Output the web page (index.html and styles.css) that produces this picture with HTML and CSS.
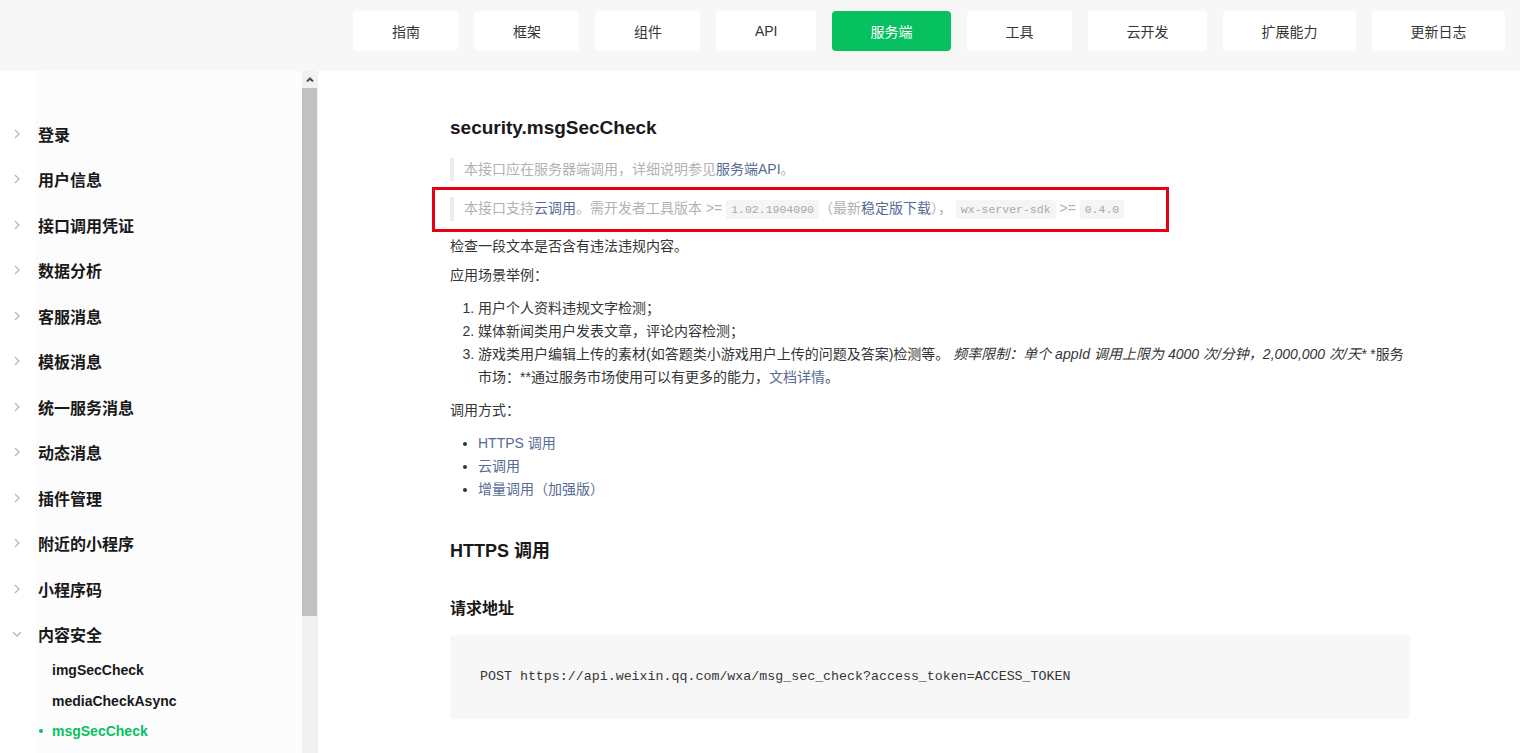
FILE: index.html
```html
<!DOCTYPE html>
<html lang="zh-CN">
<head>
<meta charset="UTF-8">
<title>security.msgSecCheck</title>
<link rel="stylesheet" href="styles.css">
</head>
<body>
<header class="top">
  <nav class="top-nav">
    <a class="nav-btn">指南</a>
    <a class="nav-btn">框架</a>
    <a class="nav-btn">组件</a>
    <a class="nav-btn">API</a>
    <a class="nav-btn on">服务端</a>
    <a class="nav-btn">工具</a>
    <a class="nav-btn">云开发</a>
    <a class="nav-btn">扩展能力</a>
    <a class="nav-btn">更新日志</a>
  </nav>
</header>

<div class="frame">
  <aside class="side">
    <ul class="menu">
      <li class="menu-item"><a><span class="arrow"><svg width="6" height="10" viewBox="0 0 6 10"><polyline points="1,1 5,5 1,9" /></svg></span>登录</a></li>
      <li class="menu-item"><a><span class="arrow"><svg width="6" height="10" viewBox="0 0 6 10"><polyline points="1,1 5,5 1,9" /></svg></span>用户信息</a></li>
      <li class="menu-item"><a><span class="arrow"><svg width="6" height="10" viewBox="0 0 6 10"><polyline points="1,1 5,5 1,9" /></svg></span>接口调用凭证</a></li>
      <li class="menu-item"><a><span class="arrow"><svg width="6" height="10" viewBox="0 0 6 10"><polyline points="1,1 5,5 1,9" /></svg></span>数据分析</a></li>
      <li class="menu-item"><a><span class="arrow"><svg width="6" height="10" viewBox="0 0 6 10"><polyline points="1,1 5,5 1,9" /></svg></span>客服消息</a></li>
      <li class="menu-item"><a><span class="arrow"><svg width="6" height="10" viewBox="0 0 6 10"><polyline points="1,1 5,5 1,9" /></svg></span>模板消息</a></li>
      <li class="menu-item"><a><span class="arrow"><svg width="6" height="10" viewBox="0 0 6 10"><polyline points="1,1 5,5 1,9" /></svg></span>统一服务消息</a></li>
      <li class="menu-item"><a><span class="arrow"><svg width="6" height="10" viewBox="0 0 6 10"><polyline points="1,1 5,5 1,9" /></svg></span>动态消息</a></li>
      <li class="menu-item"><a><span class="arrow"><svg width="6" height="10" viewBox="0 0 6 10"><polyline points="1,1 5,5 1,9" /></svg></span>插件管理</a></li>
      <li class="menu-item"><a><span class="arrow"><svg width="6" height="10" viewBox="0 0 6 10"><polyline points="1,1 5,5 1,9" /></svg></span>附近的小程序</a></li>
      <li class="menu-item"><a><span class="arrow"><svg width="6" height="10" viewBox="0 0 6 10"><polyline points="1,1 5,5 1,9" /></svg></span>小程序码</a></li>
      <li class="menu-item open"><a><span class="arrow"><svg width="10" height="6" viewBox="0 0 10 6"><polyline points="1,1 5,5 9,1" /></svg></span>内容安全</a>
        <ul class="sub">
          <li><a>imgSecCheck</a></li>
          <li><a>mediaCheckAsync</a></li>
          <li class="active"><a>msgSecCheck</a></li>
        </ul>
      </li>
    </ul>
  </aside>

  <div class="scrollbar">
    <div class="sb-up"><svg width="8" height="5" viewBox="0 0 8 5"><polyline points="1,4.5 4,1.5 7,4.5" /></svg></div>
    <div class="sb-thumb"></div>
  </div>

  <main class="main">
    <article class="doc">
      <h1>security.msgSecCheck</h1>
      <blockquote class="note"><p>本接口应在服务器端调用，详细说明参见<a>服务端API</a>。</p></blockquote>
      <div class="marked">
        <blockquote class="note"><p>本接口支持<a>云调用</a>。需开发者工具版本 &gt;= <code>1.02.1904090</code>（最新<a>稳定版下载</a>）， <code>wx-server-sdk</code> &gt;= <code>0.4.0</code></p></blockquote>
      </div>
      <p>检查一段文本是否含有违法违规内容。</p>
      <p>应用场景举例：</p>
      <ol>
        <li>用户个人资料违规文字检测；</li>
        <li>媒体新闻类用户发表文章，评论内容检测；</li>
        <li>游戏类用户编辑上传的素材(如答题类小游戏用户上传的问题及答案)检测等。 <em>频率限制：单个 appId 调用上限为 4000 次/分钟，2,000,000 次/天*</em> *服务市场：**通过服务市场使用可以有更多的能力，<a>文档详情</a>。</li>
      </ol>
      <p>调用方式：</p>
      <ul>
        <li><a>HTTPS 调用</a></li>
        <li><a>云调用</a></li>
        <li><a>增量调用（加强版）</a></li>
      </ul>
      <h2>HTTPS 调用</h2>
      <h3>请求地址</h3>
      <pre>POST https://api.weixin.qq.com/wxa/msg_sec_check?access_token=ACCESS_TOKEN</pre>
    </article>
  </main>
</div>
</body>
</html>
```

FILE: styles.css
```css
* {
  box-sizing: border-box;
}
html, body {
  margin: 0;
  height: 753px;
  overflow: hidden;
}
body {
  font-family: "Liberation Sans", "Noto Sans CJK SC", sans-serif;
  font-size: 14px;
  color: #353535;
  background: #fff;
}
a {
  color: #576b95;
  text-decoration: none;
}

/* top bar */
.top {
  height: 71px;
  background: #f7f7f7;
  display: flex;
  justify-content: flex-end;
  padding: 11px 15px 0 0;
}
.top-nav {
  display: flex;
  gap: 16px;
  height: 40px;
}
.nav-btn {
  display: flex;
  align-items: center;
  padding: 0 38.5px;
  background: #fff;
  border-radius: 4px;
  color: #353535;
}
.nav-btn.on {
  background: #07c160;
  color: #fff;
}

/* body frame */
.frame {
  display: flex;
  height: 682px;
}

/* side menu */
.side {
  width: 302px;
  flex: none;
  background: linear-gradient(to right, #fff 35px, #fcfcfc 35px);
  padding-top: 40px;
}
.menu, .sub {
  list-style: none;
  margin: 0;
  padding: 0;
}
.menu-item > a {
  display: flex;
  align-items: center;
  height: 45.5px;
  font-size: 16px;
  font-weight: 600;
  color: #191919;
}
.arrow {
  width: 38px;
  flex: none;
  display: flex;
  align-items: center;
  padding-left: 14px;
}
.open .arrow {
  padding-left: 12px;
}
.arrow polyline {
  fill: none;
  stroke: #b8b8b8;
  stroke-width: 1.3;
}
.sub {
  margin-top: -2px;
}
.sub a {
  display: flex;
  align-items: center;
  height: 30.5px;
  padding-left: 39px;
  font-size: 14px;
  font-weight: bold;
  color: #191919;
}
.sub a::before {
  content: "";
  width: 4px;
  height: 4px;
  border-radius: 50%;
  margin-right: 9px;
}
.sub .active a {
  color: #07c160;
}
.sub .active a::before {
  background: #07c160;
}

/* fake scrollbar of the menu */
.scrollbar {
  width: 16px;
  flex: none;
  background: #f1f1f1;
}
.sb-up {
  height: 17px;
  display: flex;
  align-items: center;
  justify-content: center;
}
.sb-up polyline {
  fill: none;
  stroke: #505050;
  stroke-width: 2;
}
.sb-thumb {
  width: 15px;
  height: 528px;
  background: #c1c1c1;
}

/* document */
.main {
  flex: 1;
  padding: 43px 0 0 132px;
  overflow: hidden;
}
.doc {
  width: 960px;
}
.doc h1 {
  font-size: 19px;
  line-height: 28px;
  margin: 0 0 16px;
  color: #191919;
}
.note {
  margin: 0 0 16px;
  border-left: 4px solid #ececec;
  padding-left: 10px;
  color: #b2b2b2;
  line-height: 22px;
}
.note p {
  margin: 0;
}
.note code {
  font-family: "Liberation Mono", monospace;
  font-size: 11.5px;
  color: #a8a8a8;
  background: #f5f5f5;
  padding: 3px 5px;
  border-radius: 3px;
}
.marked {
  position: relative;
  margin-bottom: 14px;
}
.marked .note {
  margin: 0;
}
.marked::after {
  content: "";
  position: absolute;
  left: -18px;
  top: -10px;
  width: 731px;
  height: 39px;
  border: 3px solid #e60012;
}
.doc p {
  margin: 6px 0;
  line-height: 23px;
}
.doc ol, .doc ul {
  margin: 10px 0;
  padding-left: 28px;
  line-height: 23px;
}
.doc h2 {
  font-size: 18px;
  line-height: 26px;
  margin: 37px 0 33px;
  color: #191919;
}
.doc h3 {
  font-size: 16px;
  line-height: 24px;
  margin: 0 0 14px;
  color: #191919;
}
.doc pre {
  margin: 0;
  background: #f7f7f7;
  border-radius: 4px;
  padding: 30px;
  font-family: "Liberation Mono", monospace;
  font-size: 13.3px;
  line-height: 24px;
  color: #353535;
}
```
